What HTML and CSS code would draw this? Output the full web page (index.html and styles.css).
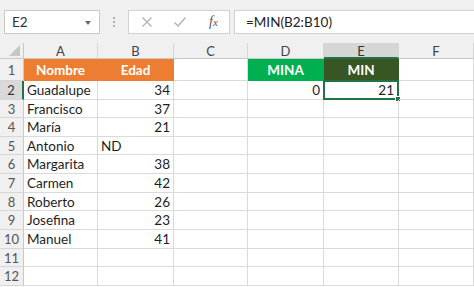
FILE: index.html
```html
<!DOCTYPE html>
<html lang="es">
<head>
<meta charset="utf-8">
<title>MIN</title>
<link rel="stylesheet" href="styles.css">
</head>
<body>
<div class="app">
  <div class="toolbar">
    <div class="namebox"><span class="ref">E2</span><span class="caret"></span></div>
    <div class="grip"><i></i><i></i><i></i></div>
    <div class="fxbox">
      <svg class="ico" width="12" height="12" viewBox="0 0 12 12"><path d="M1.5 1.5 L10.5 10.5 M10.5 1.5 L1.5 10.5" stroke="#b3b3b3" stroke-width="1.4" fill="none"/></svg>
      <svg class="ico" width="14" height="12" viewBox="0 0 14 12"><path d="M1.5 6.5 L5 10 L12.5 1.5" stroke="#b3b3b3" stroke-width="1.5" fill="none"/></svg>
      <span class="fx">f<span class="fxx">x</span></span>
    </div>
    <div class="formula">=MIN(B2:B10)</div>
  </div>
  <div class="sheet">
    <div class="corner"><span class="tri"></span></div>
    <div class="ch">A</div><div class="ch">B</div><div class="ch">C</div><div class="ch">D</div><div class="ch sel">E</div><div class="ch">F</div>

    <div class="rh">1</div>
    <div class="c hd orange">Nombre</div><div class="c hd orange">Edad</div><div class="c"></div><div class="c hd green">MINA</div><div class="c hd dgreen">MIN</div><div class="c"></div>

    <div class="rh sel">2</div>
    <div class="c">Guadalupe</div><div class="c n">34</div><div class="c"></div><div class="c n">0</div><div class="c n active">21<span class="handle"></span></div><div class="c"></div>

    <div class="rh">3</div>
    <div class="c">Francisco</div><div class="c n">37</div><div class="c"></div><div class="c"></div><div class="c"></div><div class="c"></div>

    <div class="rh">4</div>
    <div class="c">María</div><div class="c n">21</div><div class="c"></div><div class="c"></div><div class="c"></div><div class="c"></div>

    <div class="rh">5</div>
    <div class="c">Antonio</div><div class="c">ND</div><div class="c"></div><div class="c"></div><div class="c"></div><div class="c"></div>

    <div class="rh">6</div>
    <div class="c">Margarita</div><div class="c n">38</div><div class="c"></div><div class="c"></div><div class="c"></div><div class="c"></div>

    <div class="rh">7</div>
    <div class="c">Carmen</div><div class="c n">42</div><div class="c"></div><div class="c"></div><div class="c"></div><div class="c"></div>

    <div class="rh">8</div>
    <div class="c">Roberto</div><div class="c n">26</div><div class="c"></div><div class="c"></div><div class="c"></div><div class="c"></div>

    <div class="rh">9</div>
    <div class="c">Josefina</div><div class="c n">23</div><div class="c"></div><div class="c"></div><div class="c"></div><div class="c"></div>

    <div class="rh">10</div>
    <div class="c">Manuel</div><div class="c n">41</div><div class="c"></div><div class="c"></div><div class="c"></div><div class="c"></div>

    <div class="rh">11</div>
    <div class="c"></div><div class="c"></div><div class="c"></div><div class="c"></div><div class="c"></div><div class="c"></div>

    <div class="rh">12</div>
    <div class="c"></div><div class="c"></div><div class="c"></div><div class="c"></div><div class="c"></div><div class="c"></div>
  </div>
</div>
</body>
</html>
```

FILE: styles.css
```css
* { box-sizing: border-box; }
html, body { margin: 0; padding: 0; }
body {
  width: 474px;
  height: 287px;
  overflow: hidden;
  background: #ffffff;
  font-family: Lato, "Liberation Sans", Arial, sans-serif;
  color: #222;
}
.app { width: 474px; height: 287px; overflow: hidden; display: flex; flex-direction: column; }

.toolbar {
  height: 43px;
  flex: none;
  background: #f0f0f0;
  display: flex;
  align-items: flex-start;
  padding-top: 10px;
  padding-left: 4px;
}
.namebox {
  width: 96px;
  height: 24px;
  background: #fff;
  border: 1px solid #c9c9c9;
  display: flex;
  align-items: center;
  justify-content: space-between;
  padding: 0 8px 0 7px;
  font-size: 13.5px;
  color: #333;
}
.caret {
  width: 0; height: 0;
  border-left: 3.5px solid transparent;
  border-right: 3.5px solid transparent;
  border-top: 4px solid #6a6a6a;
  margin-top: 1px;
}
.grip {
  width: 28px;
  height: 24px;
  display: flex;
  flex-direction: column;
  align-items: center;
  justify-content: center;
  gap: 2px;
}
.grip i { display: block; width: 2px; height: 2px; background: #b0b0b0; }
.fxbox {
  width: 102px;
  height: 24px;
  background: #fff;
  border: 1px solid #d2d2d2;
  display: flex;
  align-items: center;
  padding-left: 12px;
  gap: 20px;
}
.ico { display: block; }
.fx {
  font-family: "Liberation Serif", "Times New Roman", serif;
  font-style: italic;
  font-size: 14px;
  color: #555;
  margin-left: 2px;
}
.fxx { font-size: 11px; }
.formula {
  flex: 1;
  margin-left: 4px;
  height: 24px;
  background: #fff;
  border: 1px solid #d2d2d2;
  border-right: none;
  display: flex;
  align-items: center;
  padding-left: 11px;
  font-size: 13.5px;
  color: #222;
}

.sheet {
  flex: 1;
  display: grid;
  grid-template-columns: 24px 74px 76px 74px 76px 75px 1fr;
  grid-template-rows: 16px 22px 19px 18px 19px 18px 19px 19px 18px 19px 19px 18px 19px;
  overflow: hidden;
  font-size: 13.5px;
}
.corner {
  background: #f0f0f0;
  border-right: 1px solid #c8c8c8;
  border-bottom: 1px solid #c8c8c8;
  position: relative;
}
.tri {
  position: absolute;
  right: 3px;
  bottom: 2px;
  width: 0; height: 0;
  border-left: 11px solid transparent;
  border-bottom: 11px solid #c6c6c6;
}
.ch {
  background: #f0f0f0;
  border-right: 1px solid #d6d6d6;
  border-bottom: 1px solid #c8c8c8;
  display: flex;
  align-items: center;
  justify-content: center;
  font-size: 13px;
  color: #444;
  padding-top: 1px;
}
.ch.sel { background: #d6d6d6; border-bottom: 2px solid #217346; color: #333; }
.rh {
  background: #f0f0f0;
  border-right: 1px solid #c8c8c8;
  border-bottom: 1px solid #d6d6d6;
  display: flex;
  align-items: center;
  justify-content: center;
  font-size: 13px;
  color: #555;
}
.rh.sel { background: #d9d9d9; border-right: 2px solid #217346; color: #333; }
.c {
  border-right: 1px solid #dadada;
  border-bottom: 1px solid #dadada;
  display: flex;
  align-items: center;
  padding: 0 3px 0 3px;
  white-space: nowrap;
  color: #1e1e1e;
  position: relative;
}
.c.n { justify-content: flex-end; }
.c.hd { justify-content: center; color: #fff; font-weight: bold; }
.orange { background: #ed7d31; border-color: #ed7d31; }
.green { background: #00b050; border-color: #00b050; }
.dgreen { background: #375623; border-color: #375623; }
.c.active { border: 2px solid #217346; margin: -1px 0 0 -1px; }
.handle {
  position: absolute;
  right: -4px;
  bottom: -4px;
  width: 6px;
  height: 6px;
  background: #217346;
  border: 1px solid #fff;
}
```
